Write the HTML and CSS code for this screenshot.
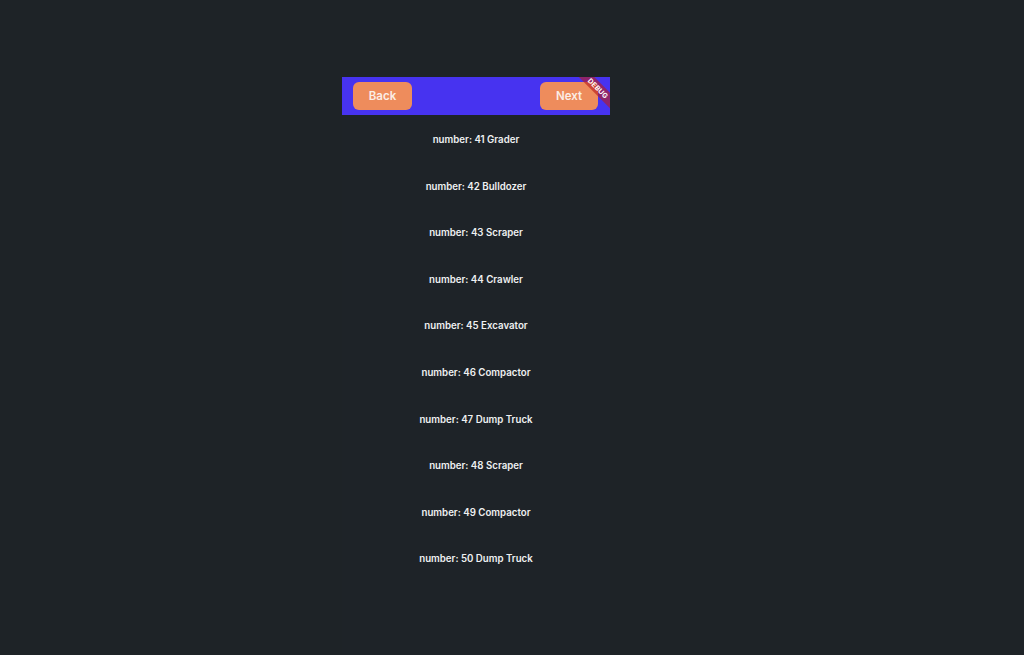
FILE: index.html
```html
<!DOCTYPE html>
<html>
<head>
<meta charset="utf-8">
<link rel="stylesheet" href="styles.css">
</head>
<body>
<div class="page">
  <div class="app">
    <header class="bar">
      <button class="btn">Back</button>
      <button class="btn">Next</button>
      <div class="debug"><span>DEBUG</span></div>
    </header>
    <ul class="list">
      <li>number: 41 Grader</li>
      <li>number: 42 Bulldozer</li>
      <li>number: 43 Scraper</li>
      <li>number: 44 Crawler</li>
      <li>number: 45 Excavator</li>
      <li>number: 46 Compactor</li>
      <li>number: 47 Dump Truck</li>
      <li>number: 48 Scraper</li>
      <li>number: 49 Compactor</li>
      <li>number: 50 Dump Truck</li>
    </ul>
  </div>
</div>
</body>
</html>
```
FILE: styles.css
```css
html, body {
  margin: 0;
  padding: 0;
  background: #1e2327;
  height: 100%;
  overflow: hidden;
}
.page {
  display: flex;
  justify-content: flex-start;
  padding: 77px 0 0 342px;
  height: 578px;
}
.app {
  width: 268px;
  height: 578px;
  background: #1e2328;
  font-family: Inter, "Noto Sans", sans-serif;
}
.bar {
  position: relative;
  overflow: hidden;
  height: 38px;
  background: #4733f0;
  display: flex;
  align-items: center;
  justify-content: space-between;
  padding: 0 12px 0 11px;
  box-sizing: border-box;
}
.btn {
  height: 28px;
  width: 59px;
  border: none;
  border-radius: 6px;
  background: #ee8c5c;
  color: #fbeee6;
  font-family: Inter, "Noto Sans", sans-serif;
  font-weight: 600;
  font-size: 11.5px;
  padding: 0;
}
.btn + .btn { width: 58px; }
.debug {
  position: absolute;
  top: 0;
  right: 0;
  width: 60px;
  height: 38px;
  overflow: hidden;
  pointer-events: none;
}
.debug span {
  position: absolute;
  top: 6px;
  right: -28px;
  width: 80px;
  height: 11px;
  line-height: 11px;
  background: rgba(183, 28, 28, 0.63);
  color: #fff;
  font-size: 7px;
  font-weight: 700;
  text-align: center;
  transform: rotate(45deg);
  letter-spacing: 0.2px;
}
.list {
  list-style: none;
  margin: 0;
  padding: 18px 0 0;
  display: flex;
  flex-direction: column;
  gap: 32.6px;
}
.list li {
  height: 14px;
  line-height: 14px;
  text-align: center;
  color: #eef0f1;
  font-size: 9.7px;
  font-weight: 600;
}
```
